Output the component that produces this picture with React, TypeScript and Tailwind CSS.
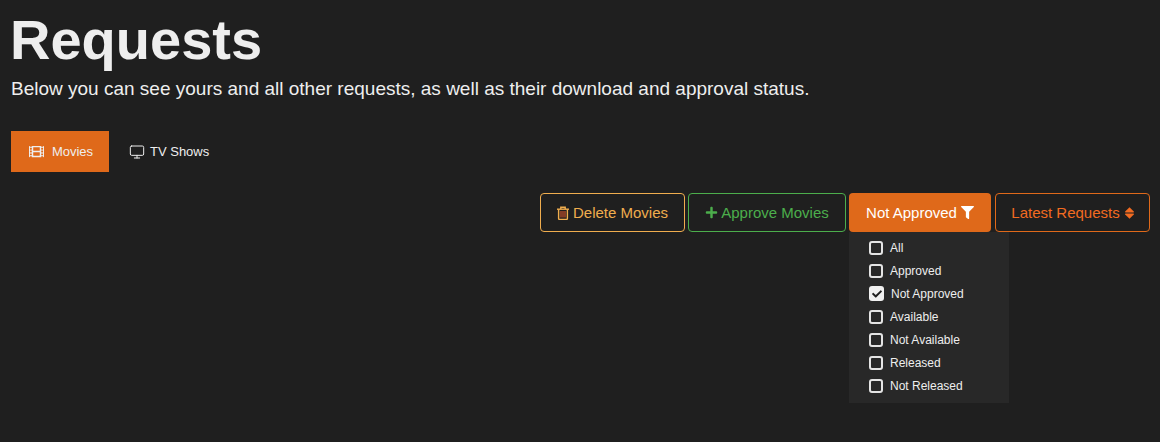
import React from 'react';
import { Monitor } from 'lucide-react';
import { FaCheck, FaFilm, FaFilter, FaPlus } from 'react-icons/fa';

const filters = [
  { label: 'All', checked: false },
  { label: 'Approved', checked: false },
  { label: 'Not Approved', checked: true },
  { label: 'Available', checked: false },
  { label: 'Not Available', checked: false },
  { label: 'Released', checked: false },
  { label: 'Not Released', checked: false },
];

const SortIcon = () => (
  <svg width="9" height="12" viewBox="0 0 9 12" fill="currentColor">
    <path d="M4.5 0.2 8.8 4.6c.3.4.1.9-.4.9H.6c-.5 0-.7-.5-.4-.9L4.5.2Z" />
    <path d="M4.5 11.8.2 7.4c-.3-.4-.1-.9.4-.9h7.8c.5 0 .7.5.4.9L4.5 11.8Z" />
  </svg>
);

const TrashIcon = () => (
  <svg width="12" height="14" viewBox="0 0 12 14" fill="none" stroke="currentColor">
    <path d="M0 3.2h12" strokeWidth="1.4" />
    <path d="M3.8 3V1.2h4.4V3" strokeWidth="1.4" />
    <path d="M1.6 3.2v9.3c0 .5.4.9.9.9h7c.5 0 .9-.4.9-.9V3.2" strokeWidth="1.4" />
    <path d="M4 5v6.5M6 5v6.5M8 5v6.5" strokeWidth="1.2" stroke="#c8502a" />
  </svg>
);

const FilterOption = ({ label, checked }: { label: string; checked: boolean }) => (
  <div className="flex h-[23px] items-center pl-[20px]">
    {checked ? (
      <span className="flex h-[15px] w-[15px] items-center justify-center rounded-[3px] bg-[#f0f0f0]">
        <FaCheck size={10} className="text-[#1f1f1f]" />
      </span>
    ) : (
      <span className="h-[14px] w-[14px] rounded-[3px] border-2 border-[#e4e4e4]" />
    )}
    <span className="ml-[7px] text-[12px] font-normal text-[#eeeeee]">{label}</span>
  </div>
);

export default function App() {
  return (
    <div className="h-[442px] w-[1160px] overflow-hidden bg-[#1f1f1f] font-['Liberation_Sans',Arial,sans-serif]">
      <div className="pl-[11px] pr-[10px]">
        <h1 className="-ml-[1px] pt-[9px] text-[56px] font-bold leading-[62px] text-[#eeeeee]">Requests</h1>
        <p className="mt-[4px] text-[19px] leading-[27px] text-[#eeeeee]">
          Below you can see yours and all other requests, as well as their download and approval status.
        </p>

        <div className="mt-[29px] flex h-[41px] text-[13px] text-[#eeeeee]">
          <div className="flex w-[98px] items-center justify-center gap-[8px] bg-[#df691a] pl-[2px]">
            <FaFilm size={15} className="text-[#eeeeee]" />
            <span>Movies</span>
          </div>
          <div className="ml-[20px] flex items-center gap-[5px]">
            <Monitor size={16} strokeWidth={1.5} />
            <span>TV Shows</span>
          </div>
        </div>

        <div className="mt-[21px] flex justify-end gap-[3px] text-[15px]">
          <button className="flex h-[39px] w-[145px] items-center justify-center gap-[4px] rounded-[4px] border border-[#f0ad4e] text-[#f0ad4e]">
            <TrashIcon />
            <span className="relative top-[1px]">Delete Movies</span>
          </button>
          <button className="flex h-[39px] w-[158px] items-center justify-center gap-[3px] rounded-[4px] border border-[#4cae4c] text-[#4cae4c]">
            <FaPlus size={13} />
            <span className="relative top-[1px]">Approve Movies</span>
          </button>
          <div className="relative">
            <button className="flex h-[39px] w-[142px] items-center justify-center gap-[4px] rounded-[4px] bg-[#df691a] text-[#ffffff]">
              <span className="relative top-[1px]">Not Approved</span>
              <FaFilter size={13} />
            </button>
            <div className="absolute left-0 top-[39px] h-[171px] w-[160px] bg-[#282828] pt-[4px]">
              {filters.map((filter) => (
                <FilterOption key={filter.label} label={filter.label} checked={filter.checked} />
              ))}
            </div>
          </div>
          <button className="ml-[1px] flex h-[39px] w-[155px] items-center justify-center gap-[5px] rounded-[4px] border border-[#df691a] text-[#f26b21]">
            <span className="relative top-[1px]">Latest Requests</span>
            <SortIcon />
          </button>
        </div>
      </div>
    </div>
  );
}
